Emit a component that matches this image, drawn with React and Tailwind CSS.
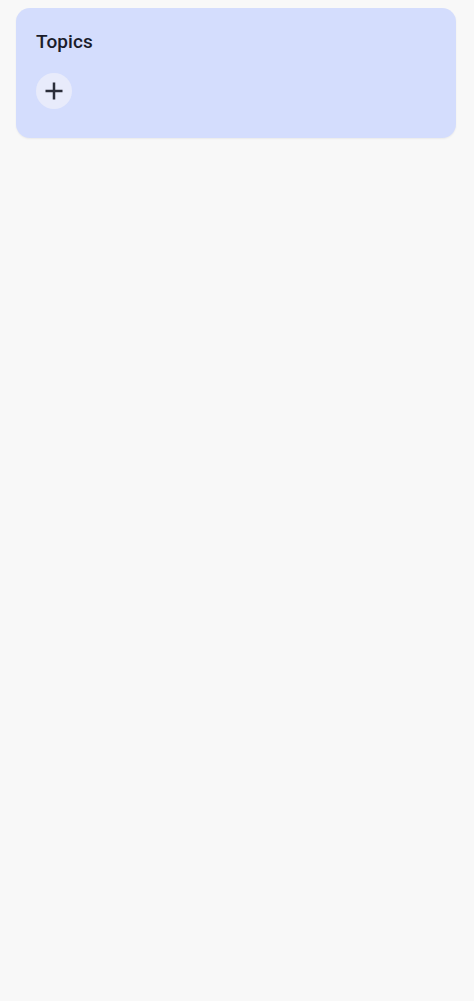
import React from "react";

export default function App() {
  return (
    <div className="min-h-screen bg-[#f8f8f8] pl-4 pr-[18px] pt-2 font-['Roboto',sans-serif]">
      {/* Topics card */}
      <div className="h-[130px] rounded-[14px] bg-[#d4ddfd] px-5 pt-[22px] shadow-[0_1px_2px_rgba(0,0,0,0.06)]">
        <h2 className="text-[19px] leading-6 font-medium tracking-[0.1px] text-[#1a1c2b]">Topics</h2>
        <button className="mt-[19px] flex h-9 w-9 items-center justify-center rounded-full bg-[#e8ebfb] text-[#2a2d3a]">
          <svg width="20" height="20" viewBox="0 0 20 20" fill="none">
            <path d="M10 1.5v17M1.5 10h17" stroke="currentColor" strokeWidth="2.5" />
          </svg>
        </button>
      </div>
    </div>
  );
}
